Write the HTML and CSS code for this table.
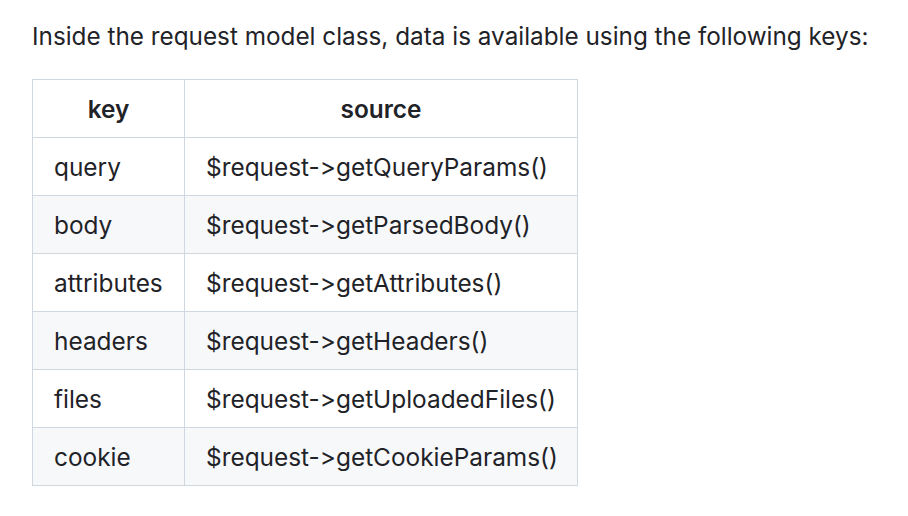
FILE: index.html
```html
<!DOCTYPE html>
<html>
<head>
<meta charset="utf-8">
<link rel="stylesheet" href="styles.css">
</head>
<body>
<div class="markdown">
<p class="intro">Inside the request model class, data is available using the following keys:</p>
<table class="keys">
<colgroup><col class="col-key"><col class="col-source"></colgroup>
<thead>
<tr><th>key</th><th>source</th></tr>
</thead>
<tbody>
<tr><td>query</td><td>$request-&gt;getQueryParams()</td></tr>
<tr><td>body</td><td>$request-&gt;getParsedBody()</td></tr>
<tr><td>attributes</td><td>$request-&gt;getAttributes()</td></tr>
<tr><td>headers</td><td>$request-&gt;getHeaders()</td></tr>
<tr><td>files</td><td>$request-&gt;getUploadedFiles()</td></tr>
<tr><td>cookie</td><td>$request-&gt;getCookieParams()</td></tr>
</tbody>
</table>
</div>
</body>
</html>
```
FILE: styles.css
```css
html, body {
  margin: 0;
  padding: 0;
  background: #ffffff;
}
body {
  font-family: Inter, "Liberation Sans", sans-serif;
  font-feature-settings: "calt" 0, "liga" 0;
  font-variant-ligatures: none;
  color: #1f2328;
  font-size: 24.3px;
}
.markdown {
  padding: 16px 32px;
}
.intro {
  margin: 0 0 23px 0;
  line-height: 40px;
  font-size: 24.3px;
  white-space: nowrap;
}
.keys {
  border-collapse: collapse;
  border-spacing: 0;
  table-layout: fixed;
  width: 545px;
}
.col-key { width: 152px; }
.col-source { width: 393px; }
.keys th, .keys td {
  border: 1px solid #d0d7de;
  padding: 0 21px;
  height: 58px;
  box-sizing: border-box;
  font-size: 24.4px;
  line-height: 36px;
  text-align: left;
  white-space: nowrap;
  overflow: visible;
}
.keys th {
  font-weight: 600;
  text-align: center;
}
.keys tbody tr:nth-child(even) {
  background: #f6f8fa;
}
```
